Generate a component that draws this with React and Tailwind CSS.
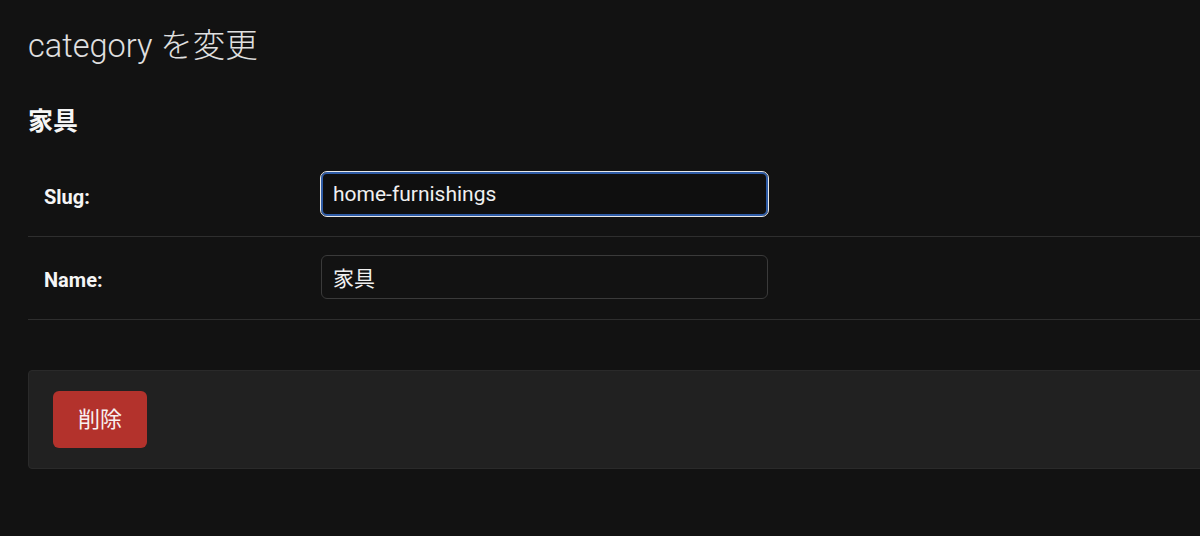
export default function App() {
  return (
    <div className="min-h-screen w-full overflow-hidden bg-[#121212] text-[#eeeeee] font-['Roboto','Noto_Sans_CJK_JP',sans-serif]">
      <div className="pl-7 pt-[22px] w-[1220px]">
        {/* タイトル */}
        <h1 className="text-[32.5px] leading-[48px] font-light text-[#e0e0e0]">
          category を変更
        </h1>

        <form className="mt-[38px]">
          <fieldset>
            <h2 className="text-[25px] leading-[28px] font-bold text-[#f5f5f5]">家具</h2>

            <div className="mt-[18px]">
              <div className="flex items-center h-[83px] pb-[3px] border-b border-[#2e2e2e]">
                <label className="w-[293px] pl-4 pt-[7px] text-[20px] font-bold text-[#f5f5f5]">
                  Slug:
                </label>
                <input
                  type="text"
                  defaultValue="home-furnishings"
                  className="w-[447px] h-[44px] px-[10px] rounded-[6px] bg-[#0f0f0f] text-[21px] text-[#f0f0f0] border-[2.5px] border-[#2f5ca6] outline outline-1 outline-[#e8e8e8] font-['Roboto','Noto_Sans_CJK_JP',sans-serif]"
                />
              </div>

              <div className="flex items-center h-[83px] pb-[3px] border-b border-[#2e2e2e]">
                <label className="w-[293px] pl-4 pt-[7px] text-[20px] font-bold text-[#f5f5f5]">
                  Name:
                </label>
                <input
                  type="text"
                  defaultValue="家具"
                  className="w-[447px] h-[44px] px-[11px] rounded-[6px] bg-[#121212] text-[21px] text-[#f0f0f0] border border-[#3a3a3a] outline-none font-['Roboto','Noto_Sans_CJK_JP',sans-serif]"
                />
              </div>
            </div>
          </fieldset>

          {/* 送信行 */}
          <div className="mt-[50px] h-[99px] flex items-center px-6 rounded-[4px] bg-[#212121] border border-[#2a2a2a]">
            <button
              type="button"
              className="h-[57px] w-[94px] rounded-[6px] bg-[#b3322c] text-[22px] text-[#f8f0f0]"
            >
              削除
            </button>
          </div>
        </form>
      </div>
    </div>
  );
}
